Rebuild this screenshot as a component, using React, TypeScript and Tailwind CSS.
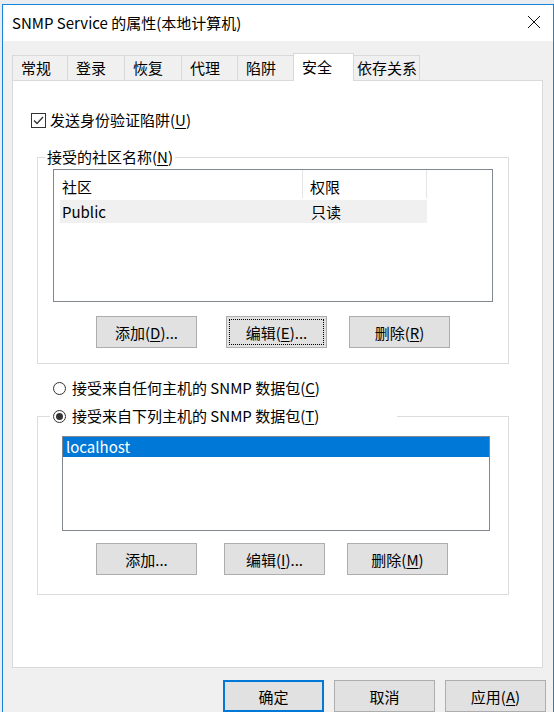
import React from 'react';

const tabs = [
  { label: '常规', w: 'w-[56px]' },
  { label: '登录', w: 'w-[58px]' },
  { label: '恢复', w: 'w-[58px]' },
  { label: '代理', w: 'w-[57px]' },
  { label: '陷阱', w: 'w-[57px]' },
  { label: '安全', w: 'w-[61px]', active: true },
  { label: '依存关系', w: 'w-[67px]', tight: true },
];

function Key({ children }: { children: React.ReactNode }) {
  return <span className="underline underline-offset-[2px] decoration-1">{children}</span>;
}

function Btn({
  children,
  className = '',
  focused = false,
  primary = false,
}: {
  children: React.ReactNode;
  className?: string;
  focused?: boolean;
  primary?: boolean;
}) {
  return (
    <button
      className={`flex h-[32px] w-[101px] shrink-0 items-center justify-center border bg-[#e1e1e1] text-[15px] leading-none text-black ${
        primary ? 'border-[#0078d7] shadow-[inset_0_0_0_1px_#0078d7]' : 'border-[#adadad]'
      } ${focused ? 'outline-1 outline-dotted outline-black -outline-offset-4' : ''} ${className}`}
    >
      {children}
    </button>
  );
}

function Radio({ checked }: { checked?: boolean }) {
  return (
    <span className="flex h-[13px] w-[13px] shrink-0 items-center justify-center rounded-full border border-[#333] bg-white">
      {checked && <span className="h-[7px] w-[7px] rounded-full bg-[#333]" />}
    </span>
  );
}

export default function App() {
  return (
    <div className="h-[712px] w-[554px] overflow-hidden bg-[#e9edf2] pl-[2px] pt-[4px] font-['Noto_Sans_CJK_SC','Noto_Sans',sans-serif] text-[15px] text-black">
      <div className="flex h-[708px] w-[552px] flex-col border-l border-r border-t border-[#1883d7] bg-[#f0f0f0]">
        {/* title bar */}
        <div className="flex h-[36px] shrink-0 items-center justify-between bg-white pl-[9px] pr-[12px]">
          <span className="leading-[20px]">SNMP Service 的属性(本地计算机)</span>
          <svg width="14" height="14" viewBox="0 0 14 14" className="mt-[-2px]">
            <path d="M1 1 L13 13 M13 1 L1 13" stroke="#111" strokeWidth="1" fill="none" />
          </svg>
        </div>

        <div className="pl-[9px] pr-[10px] pt-[12px]">
          {/* tabs */}
          <div className="flex h-[27px] items-end">
            {tabs.map((t, i) => (
              <div
                key={t.label}
                className={`${t.w} ${i > 0 ? '-ml-px' : ''} flex items-center whitespace-nowrap border border-b-0 leading-[20px] ${
                  t.tight ? 'pl-[3px]' : 'pl-[8px]'
                } ${
                  t.active
                    ? 'relative z-10 -mb-px h-[28px] border-[#d9d9d9] bg-white pb-[2px] pl-[7px]'
                    : 'h-[25px] border-[#d9d9d9] bg-[#f0f0f0]'
                }`}
              >
                {t.label}
              </div>
            ))}
          </div>

          {/* tab panel */}
          <div className="h-[588px] w-[531px] border border-[#d9d9d9] bg-white">
            <div className="ml-[18px] mt-[29px] flex h-[20px] items-center gap-[4px]">
              <svg width="15" height="15" viewBox="0 0 15 15" className="shrink-0">
                <rect x="0.5" y="0.5" width="14" height="14" fill="#fff" stroke="#333" />
                <path d="M3 7.5 L6 10.5 L12 4" stroke="#333" strokeWidth="1.3" fill="none" />
              </svg>
              <span className="leading-[20px]">
                发送身份验证陷阱(<Key>U</Key>)
              </span>
            </div>

            {/* community group */}
            <fieldset className="ml-[24px] mt-[17px] w-[472px] border border-[#dcdcdc] pb-[15px]">
              <legend className="ml-[7px] px-[2px] leading-[20px]">
                接受的社区名称(<Key>N</Key>)
              </legend>
              <div className="ml-[15px] mt-[2px] h-[133px] w-[440px] border border-[#828790] bg-white pl-[6px]">
                <div className="flex h-[28px]">
                  <div className="w-[243px] border-r border-[#e5e5e5] pl-[2px] pt-[7px] leading-[20px]">社区</div>
                  <div className="w-[124px] border-r border-[#e5e5e5] pl-[7px] pt-[7px] leading-[20px]">权限</div>
                </div>
                <div className="mt-[2px] flex h-[23px] w-[367px] items-center bg-[#f0f0f0]">
                  <div className="w-[243px] pl-[2px] leading-[20px]">Public</div>
                  <div className="w-[124px] pl-[8px] leading-[20px]">只读</div>
                </div>
              </div>
              <div className="mt-[14px] flex">
                <Btn className="ml-[58px]">
                  添加(<Key>D</Key>)...
                </Btn>
                <Btn className="ml-[29px]" focused>
                  编辑(<Key>E</Key>)...
                </Btn>
                <Btn className="ml-[22px]">
                  删除(<Key>R</Key>)
                </Btn>
              </div>
            </fieldset>

            <div className="ml-[40px] mt-[14px] flex h-[20px] items-center gap-[6px]">
              <Radio />
              <span className="leading-[20px]">
                接受来自任何主机的 SNMP 数据包(<Key>C</Key>)
              </span>
            </div>

            {/* host group */}
            <fieldset className="ml-[24px] mt-[8px] w-[472px] border border-[#dcdcdc] pb-[19px]">
              <legend className="ml-[12px] flex h-[20px] w-[347px] items-center gap-[6px] pl-[3px]">
                <Radio checked />
                <span className="leading-[20px]">
                  接受来自下列主机的 SNMP 数据包(<Key>T</Key>)
                </span>
              </legend>
              <div className="ml-[24px] mt-[10px] h-[95px] w-[428px] border border-[#828790] bg-white">
                <div className="flex h-[20px] items-center bg-[#0078d7] pl-[3px] leading-[20px] text-white">
                  localhost
                </div>
              </div>
              <div className="mt-[12px] flex">
                <Btn className="ml-[58px]">添加...</Btn>
                <Btn className="ml-[27px]">
                  编辑(<Key>I</Key>)...
                </Btn>
                <Btn className="ml-[22px]">
                  删除(<Key>M</Key>)
                </Btn>
              </div>
            </fieldset>
          </div>

          {/* dialog buttons */}
          <div className="ml-[211px] mt-[12px] flex gap-[10px]">
            <Btn primary>确定</Btn>
            <Btn>取消</Btn>
            <Btn>
              应用(<Key>A</Key>)
            </Btn>
          </div>
        </div>
      </div>
    </div>
  );
}
